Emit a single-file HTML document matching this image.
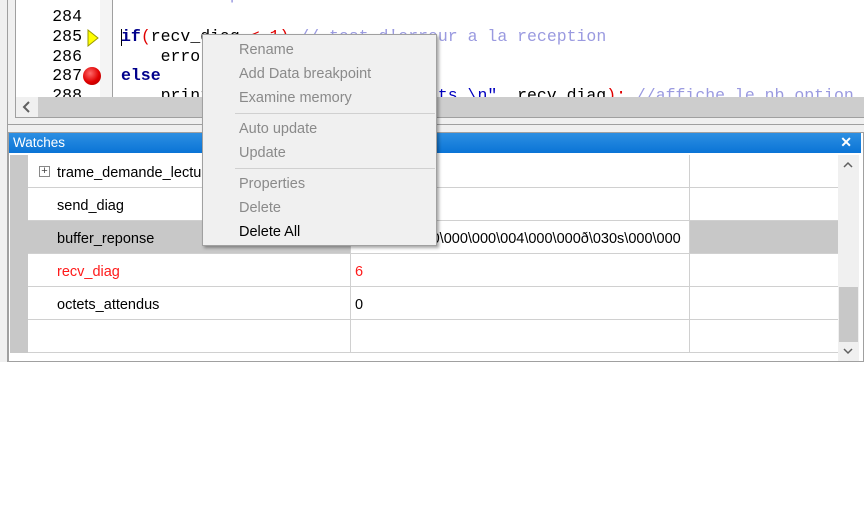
<!DOCTYPE html>
<html><head><meta charset="utf-8"><style>
*{margin:0;padding:0;box-sizing:border-box}
body{width:864px;height:519px;background:#fff;position:relative;overflow:hidden;font-family:"Liberation Sans",sans-serif}
.a{position:absolute}
.code{font-family:"Liberation Mono",monospace;font-size:16.5px;white-space:pre;line-height:20px}
.kw{color:#00008b;font-weight:bold}
.p{color:#e00000}
.c{color:#9a9ae0}
.ln{font-family:"Liberation Mono",monospace;font-size:16.5px;color:#000;width:68px;text-align:right;left:14px}
.row{position:absolute;left:28px;width:810px;height:33px;border-bottom:1px solid #d0d0d0;font-size:14.5px}
.row span{position:absolute;top:10px}
.mi{position:absolute;left:36px;font-size:14.5px;color:#8a8a8a}
</style></head><body>
<div class="a" style="left:0;top:0;width:8px;height:362px;background:#f0f0f0;border-right:1px solid #a0a0a0"></div>
<div class="a" style="left:8px;top:0;width:856px;height:132px;background:#f0f0f0"></div>
<div class="a" style="left:15px;top:0;width:849px;height:118px;background:#fff;border-left:1px solid #a0a0a0;border-bottom:1px solid #a0a0a0"></div>
<div class="a" style="left:100px;top:0;width:12px;height:97px;background:#f4f4f4"></div>
<div class="a" style="left:112px;top:0;width:1px;height:97px;background:#a0a0a0"></div>
<div class="a ln" style="top:-15px;line-height:20px">283</div>
<div class="a ln" style="top:7px;line-height:20px">284</div>
<div class="a ln" style="top:27px;line-height:20px">285</div>
<div class="a ln" style="top:47px;line-height:20px">286</div>
<div class="a ln" style="top:66px;line-height:20px">287</div>
<div class="a ln" style="top:86px;line-height:20px;height:11px;overflow:hidden">288</div>
<svg class="a" style="left:86px;top:29px" width="14" height="18"><path d="M2 1 L12 9 L2 17 Z" fill="#ffff00" stroke="#9a9a00" stroke-width="1"/></svg>
<div class="a" style="left:83px;top:67px;width:18px;height:18px;border-radius:50%;background:radial-gradient(circle at 40% 35%,#ff6b6b,#e00000 55%,#a00000)"></div>
<div class="a code c" style="left:121px;top:-15px">//test reception du buffer: la boucle sera la valeur -1 en mesure</div>
<div class="a code" style="left:121px;top:27px"><span class="kw">if</span><span class="p">(</span>recv_diag <span class="p">&lt;</span> <span class="p">1)</span> <span class="c">// test d'erreur a la reception</span></div>
<div class="a" style="left:121px;top:29px;width:1px;height:17px;background:#000"></div>
<div class="a code" style="left:121px;top:47px">    erro</div>
<div class="a code kw" style="left:121px;top:66px">else</div>
<div class="a code" style="left:121px;top:86px;height:11px;overflow:hidden">    printf(<span style="color:#0000c0">"reception de %d octets \n"</span>, recv_diag<span class="p">);</span> <span class="c">//affiche le nb option</span></div>
<div class="a" style="left:16px;top:97px;width:848px;height:20px;background:#f0f0f0"></div>
<div class="a" style="left:38px;top:97px;width:826px;height:20px;background:#cdcdcd"></div>
<svg class="a" style="left:20px;top:100px" width="14" height="14"><path d="M9 2 L4 7 L9 12" fill="none" stroke="#606060" stroke-width="2"/></svg>
<div class="a" style="left:8px;top:124px;width:856px;height:1px;background:#a0a0a0"></div>
<div class="a" style="left:8px;top:132px;width:856px;height:230px;border:1px solid #a0a0a0;background:#fff"></div>
<div class="a" style="left:9px;top:133px;width:852px;height:20px;background:linear-gradient(#2d8fe2,#0a74d6);color:#fff;font-size:13.5px;padding:2px 0 0 4px">Watches<span style="position:absolute;right:9px;top:1px;font-size:14px;font-weight:bold">✕</span></div>
<div class="a" style="left:10px;top:155px;width:18px;height:198px;background:#c8c8c8"></div>
<div class="a" style="left:28px;top:221px;width:810px;height:33px;background:#c8c8c8"></div>
<div class="a" style="left:350px;top:221px;width:339px;height:33px;background:#fff"></div>
<div class="row" style="top:155px"><span style="left:11px;top:11px;width:11px;height:11px;border:1px solid #888;font-size:11px;line-height:8px;text-align:center;color:#444">+</span><span style="left:29px">trame_demande_lecture</span></div>
<div class="row" style="top:188px"><span style="left:29px">send_diag</span></div>
<div class="row" style="top:221px"><span style="left:29px">buffer_reponse</span><span style="left:327px;width:334px;overflow:hidden;white-space:nowrap">\000\000\000\000\000\004\000\000ð\030s\000\000</span></div>
<div class="row" style="top:254px;color:#ff1a1a"><span style="left:29px">recv_diag</span><span style="left:327px">6</span></div>
<div class="row" style="top:287px"><span style="left:29px">octets_attendus</span><span style="left:327px">0</span></div>
<div class="row" style="top:320px"></div>
<div class="a" style="left:350px;top:155px;width:1px;height:198px;background:#d0d0d0"></div>
<div class="a" style="left:689px;top:155px;width:1px;height:198px;background:#d0d0d0"></div>
<div class="a" style="left:838px;top:155px;width:21px;height:206px;background:#f0f0f0"></div>
<div class="a" style="left:839px;top:287px;width:19px;height:55px;background:#c8c8c8"></div>
<svg class="a" style="left:842px;top:160px" width="12" height="10"><path d="M2 7 L6 3 L10 7" fill="none" stroke="#606060" stroke-width="1.5"/></svg>
<svg class="a" style="left:842px;top:346px" width="12" height="10"><path d="M2 3 L6 7 L10 3" fill="none" stroke="#606060" stroke-width="1.5"/></svg>
<div class="a" style="left:202px;top:34px;width:235px;height:212px;background:#f0f0f0;border:1px solid #a0a0a0;box-shadow:2px 2px 3px rgba(0,0,0,.35)">
<div class="mi" style="top:7px">Rename</div>
<div class="mi" style="top:31px">Add Data breakpoint</div>
<div class="mi" style="top:55px">Examine memory</div>
<div class="a" style="left:32px;top:78px;width:200px;height:1px;background:#d0d0d0"></div>
<div class="mi" style="top:86px">Auto update</div>
<div class="mi" style="top:110px">Update</div>
<div class="a" style="left:32px;top:133px;width:200px;height:1px;background:#d0d0d0"></div>
<div class="mi" style="top:141px">Properties</div>
<div class="mi" style="top:165px">Delete</div>
<div class="mi" style="top:189px;color:#000">Delete All</div>
</div>
</body></html>
